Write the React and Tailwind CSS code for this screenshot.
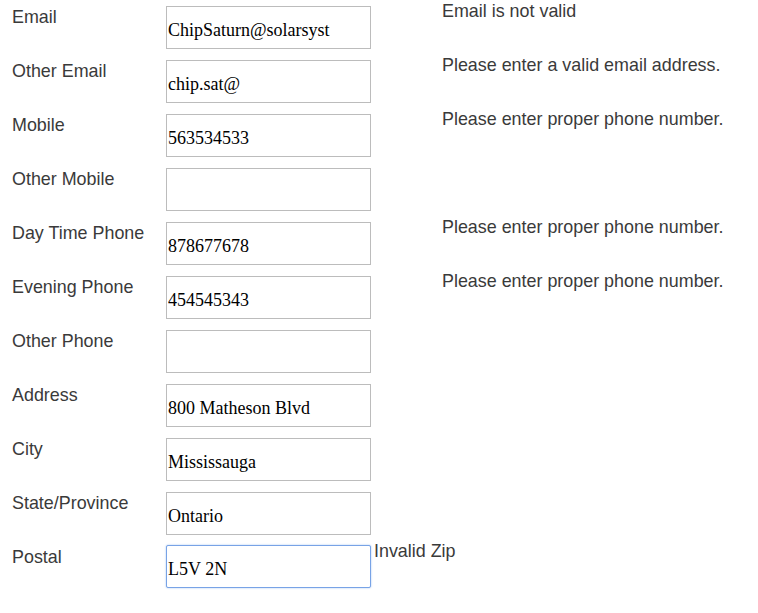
import React from 'react';

const rows = [
  { label: 'Email', value: 'ChipSaturn@solarsyst', error: 'Email is not valid' },
  { label: 'Other Email', value: 'chip.sat@', error: 'Please enter a valid email address.' },
  { label: 'Mobile', value: '563534533', error: 'Please enter proper phone number.' },
  { label: 'Other Mobile', value: '', error: '' },
  { label: 'Day Time Phone', value: '878677678', error: 'Please enter proper phone number.' },
  { label: 'Evening Phone', value: '454545343', error: 'Please enter proper phone number.' },
  { label: 'Other Phone', value: '', error: '' },
  { label: 'Address', value: '800 Matheson Blvd', error: '' },
  { label: 'City', value: 'Mississauga', error: '' },
  { label: 'State/Province', value: 'Ontario', error: '' },
];

const FieldRow = ({ label, value, error }) => (
  <div className="flex items-start h-[54px]">
    <label className="w-[166px] pl-3 pt-px leading-[20px] text-[17.9px] text-[#3a3a3a]">
      {label}
    </label>
    <input
      type="text"
      defaultValue={value}
      className="w-[205px] h-[43px] box-border border border-[#bcbcbc] bg-white pl-px pt-[13px] pb-[7px] text-[18px] text-black font-['Liberation_Serif',serif] outline-none"
    />
    {error && (
      <span className="ml-[71px] -mt-[5px] leading-[20px] text-[17.9px] text-[#3a3a3a]">
        {error}
      </span>
    )}
  </div>
);

export default function App() {
  return (
    <div className="w-[758px] h-[613px] bg-white pt-[6px] font-['Liberation_Sans',Arial,sans-serif]">
      {rows.map((r) => (
        <FieldRow key={r.label} {...r} />
      ))}
      <div className="flex items-start h-[54px] -mt-px">
        <label className="w-[166px] pl-3 pt-[2px] leading-[20px] text-[17.9px] text-[#3a3a3a]">
          Postal
        </label>
        <input
          type="text"
          defaultValue="L5V 2N"
          className="w-[205px] h-[43px] box-border border border-[#78a3e6] rounded-[2px] shadow-[0_0_2px_#9fc0f0] bg-white pl-px pt-[13px] pb-[7px] text-[18px] text-black font-['Liberation_Serif',serif] outline-none"
        />
        <span className="ml-[3px] -mt-[4px] leading-[20px] text-[17.9px] text-[#3a3a3a]">
          Invalid Zip
        </span>
      </div>
    </div>
  );
}
